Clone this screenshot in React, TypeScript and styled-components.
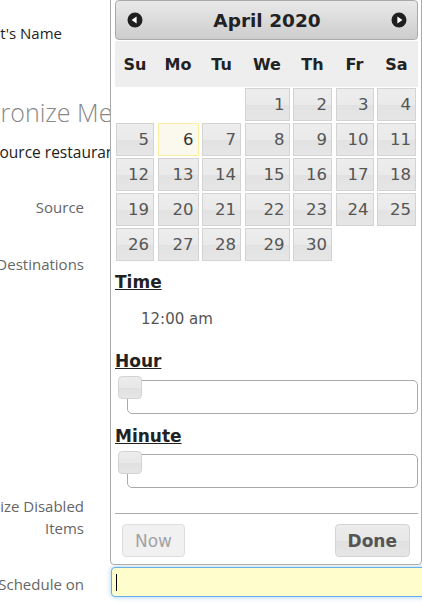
import React from 'react'
import styled, { createGlobalStyle } from 'styled-components'

const GlobalStyle = createGlobalStyle`
  html, body {
    margin: 0;
    padding: 0;
    background: #fff;
    overflow: hidden;
  }
`

const weekDays = ['Su', 'Mo', 'Tu', 'We', 'Th', 'Fr', 'Sa']
const monthDays: (number | null)[] = [null, null, null, ...Array.from({ length: 30 }, (_, i) => i + 1)]
const TODAY = 6

function Arrow({ dir }: { dir: 'prev' | 'next' }) {
  const d = dir === 'prev' ? 'M4.6 8 L9.6 4.4 V11.6 Z' : 'M11.4 8 L6.4 4.4 V11.6 Z'
  return (
    <svg width="16" height="16" viewBox="0 0 16 16">
      <circle cx="8" cy="8" r="7.5" fill="#1f1f1f" />
      <path d={d} fill="#fff" />
    </svg>
  )
}

export default function App() {
  return (
    <Page>
      <GlobalStyle />
      <Form>
        <FieldRow $top={0}>
          <Label $dark $inset={22}>Restaurant&apos;s Name</Label>
          <TextBox />
        </FieldRow>
        <Heading>Synchronize Menu</Heading>
        <Description>Source restaurant menu will be copied to the destinations</Description>
        <FieldRow $top={28}>
          <Label>Source</Label>
          <TextBox />
        </FieldRow>
        <FieldRow $top={26} $align="start">
          <Label $pad={3}>Destinations</Label>
          <ListBox />
        </FieldRow>
        <FieldRow $top={15}>
          <Label>Synchronize Disabled Items</Label>
          <div />
        </FieldRow>
        <FieldRow $top={28}>
          <Label $pad={3}>Schedule on</Label>
          <DateInput role="textbox">
            <Caret />
          </DateInput>
        </FieldRow>
      </Form>

      <Picker>
        <Header>
          <Arrow dir="prev" />
          <Title>April 2020</Title>
          <Arrow dir="next" />
        </Header>
        <WeekRow>
          {weekDays.map((d) => (
            <WeekDay key={d}>{d}</WeekDay>
          ))}
        </WeekRow>
        <DaysGrid>
          {monthDays.map((d, i) =>
            d === null ? <Blank key={`b${i}`} /> : <Day key={d} $today={d === TODAY}>{d}</Day>
          )}
        </DaysGrid>

        <SectionLabel $top={10}>Time</SectionLabel>
        <TimeValue>12:00 am</TimeValue>
        <SectionLabel $top={21}>Hour</SectionLabel>
        <Slider $top={4}>
          <Track $top={4} />
          <Handle />
        </Slider>
        <SectionLabel $top={11}>Minute</SectionLabel>
        <Slider $top={4}>
          <Track $top={3} />
          <Handle />
        </Slider>

        <ButtonPane>
          <PaneButton $disabled>Now</PaneButton>
          <PaneButton $primary>Done</PaneButton>
        </ButtonPane>
      </Picker>
    </Page>
  )
}

const Page = styled.div`
  position: relative;
  width: 422px;
  height: 603px;
  overflow: hidden;
  background: #fff;
`

const Form = styled.div`
  display: flex;
  flex-direction: column;
  width: 580px;
  margin-left: -96px;
  padding-top: 16px;
  font-family: 'Open Sans', 'Liberation Sans', sans-serif;
`

const FieldRow = styled.div<{ $top: number; $align?: string }>`
  display: grid;
  grid-template-columns: 180px 1fr;
  column-gap: 27px;
  align-items: ${(p) => p.$align ?? 'center'};
  margin-top: ${(p) => p.$top}px;
`

const Label = styled.div<{ $dark?: boolean; $inset?: number; $pad?: number }>`
  text-align: right;
  font-size: 15px;
  line-height: 22px;
  color: ${(p) => (p.$dark ? '#222' : '#666')};
  padding-right: ${(p) => p.$inset ?? 0}px;
  padding-top: ${(p) => p.$pad ?? 0}px;
`

const Heading = styled.h2`
  margin: 46px 0 0;
  padding-left: 30px;
  font-size: 25px;
  font-weight: 300;
  line-height: 32px;
  color: #888;
  white-space: nowrap;
`

const Description = styled.p`
  margin: 14px 0 0;
  padding-left: 87px;
  font-size: 15.5px;
  line-height: 20px;
  color: #222;
  white-space: nowrap;
`

const TextBox = styled.div`
  height: 34px;
  border: 1px solid #ccc;
  border-radius: 4px;
  box-sizing: border-box;
`

const ListBox = styled(TextBox)`
  height: 230px;
`

const DateInput = styled.div`
  display: flex;
  align-items: center;
  height: 30px;
  box-sizing: border-box;
  padding-left: 4px;
  background: #fffdcc;
  border: 1px solid #66afe9;
  border-radius: 4px;
  box-shadow: 0 0 5px rgba(102, 175, 233, 0.6);
`

const Caret = styled.span`
  width: 1px;
  height: 17px;
  background: #000;
`

const Picker = styled.div`
  position: absolute;
  left: 110px;
  top: -4px;
  z-index: 2;
  width: 312px;
  box-sizing: border-box;
  padding: 3px 3px 0 4px;
  background: #fff;
  border: 1px solid #aaa;
  border-radius: 4px;
  font-family: 'DejaVu Sans', Verdana, sans-serif;
  color: #222;
`

const Header = styled.div`
  display: flex;
  align-items: center;
  height: 40px;
  box-sizing: border-box;
  padding: 0 10px 0 11px;
  border: 1px solid #aaa;
  border-radius: 4px;
  background: linear-gradient(#e9e9e9, #cdcdcd);
`

const Title = styled.div`
  flex: 1;
  text-align: center;
  font-size: 18.5px;
  font-weight: bold;
  color: #222;
`

const columns = '38px 41px 39px 45px 39px 38px 39px'

const WeekRow = styled.div`
  display: grid;
  grid-template-columns: ${columns};
  column-gap: 3.5px;
  height: 46px;
  margin-top: 1px;
  padding-left: 1px;
  background: #eee;
  align-items: center;
`

const WeekDay = styled.div`
  text-align: center;
  font-size: 16px;
  font-weight: bold;
  color: #222;
`

const DaysGrid = styled.div`
  display: grid;
  grid-template-columns: ${columns};
  grid-auto-rows: 33px;
  column-gap: 3.5px;
  row-gap: 2px;
  margin-top: 1px;
  padding-left: 1px;
`

const Blank = styled.div``

const Day = styled.div<{ $today?: boolean }>`
  box-sizing: border-box;
  padding-right: 4px;
  text-align: right;
  font-size: 16.5px;
  line-height: 31px;
  border: 1px solid ${(p) => (p.$today ? '#fcefa1' : '#d3d3d3')};
  background: ${(p) =>
    p.$today ? '#fbf9ee' : 'linear-gradient(#ededed 0%, #eaeaea 50%, #e2e2e2 52%, #e6e6e6 100%)'};
  color: ${(p) => (p.$today ? '#363636' : '#555')};
`

const SectionLabel = styled.div<{ $top: number }>`
  margin-top: ${(p) => p.$top}px;
  font-size: 17px;
  line-height: 22px;
  font-weight: bold;
  text-decoration: underline;
  color: #222;
`

const TimeValue = styled.div`
  margin-top: 16px;
  padding-left: 26px;
  font-size: 15px;
  line-height: 20px;
  color: #555;
`

const Slider = styled.div<{ $top: number }>`
  position: relative;
  display: flow-root;
  margin-top: ${(p) => p.$top}px;
  padding-left: 12px;
`

const Track = styled.div<{ $top: number }>`
  margin-top: ${(p) => p.$top}px;
  height: 34px;
  box-sizing: border-box;
  border: 1px solid #aaa;
  border-radius: 5px;
`

const Handle = styled.div`
  position: absolute;
  left: 3px;
  top: 0;
  width: 24px;
  height: 23px;
  box-sizing: border-box;
  border: 1px solid #d3d3d3;
  border-radius: 4px;
  background: linear-gradient(#ececec 0%, #e8e8e8 50%, #e0e0e0 52%, #e6e6e6 100%);
`

const ButtonPane = styled.div`
  display: flex;
  justify-content: space-between;
  margin-top: 25px;
  padding: 10px 8px 7px 7px;
  border-top: 1px solid #aaa;
`

const PaneButton = styled.button<{ $primary?: boolean; $disabled?: boolean }>`
  height: 33px;
  padding: 0 12px;
  font-family: 'DejaVu Sans', Verdana, sans-serif;
  font-size: 17px;
  font-weight: ${(p) => (p.$primary ? 'bold' : 'normal')};
  color: ${(p) => (p.$disabled ? '#a3a3a3' : '#555')};
  border: 1px solid ${(p) => (p.$disabled ? '#dedede' : '#d3d3d3')};
  border-radius: 4px;
  background: ${(p) =>
    p.$disabled ? '#f1f1f1' : 'linear-gradient(#ececec 0%, #e8e8e8 50%, #e0e0e0 52%, #e6e6e6 100%)'};
`
